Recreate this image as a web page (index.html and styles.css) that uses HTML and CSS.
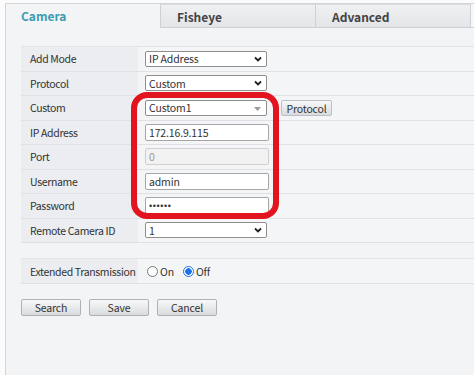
FILE: index.html
```html
<!DOCTYPE html>
<html lang="en">
<head>
    <meta charset="UTF-8">
    <title>Camera</title>
    <link rel="stylesheet" href="styles.css">
</head>
<body>
    <div class="frame">
        <!-- tabs -->
        <div class="tabs">
            <div class="tab active">Camera</div>
            <div class="tab">Fisheye</div>
            <div class="tab">Advanced</div>
            <div class="tab-rest"></div>
        </div>

        <div class="content">
            <div class="form">
                <div class="row">
                    <div class="label">Add Mode</div>
                    <div class="value">
                        <div class="select">IP Address<svg class="chev" width="8" height="6" viewBox="0 0 8 6"><path d="M1 1.5 L4 4.5 L7 1.5" fill="none" stroke="#222" stroke-width="1.8"/></svg></div>
                    </div>
                </div>
                <div class="row">
                    <div class="label">Protocol</div>
                    <div class="value">
                        <div class="select">Custom<svg class="chev" width="8" height="6" viewBox="0 0 8 6"><path d="M1 1.5 L4 4.5 L7 1.5" fill="none" stroke="#222" stroke-width="1.8"/></svg></div>
                    </div>
                </div>
                <div class="row">
                    <div class="label">Custom</div>
                    <div class="value">
                        <div class="select">Custom1<svg class="tri" width="7" height="4" viewBox="0 0 7 4"><path d="M0 0 L7 0 L3.5 4 Z" fill="#9a9a9a"/></svg></div>
                        <button class="btn small">Protocol</button>
                    </div>
                </div>
                <div class="row">
                    <div class="label">IP Address</div>
                    <div class="value"><div class="input">172.16.9.115</div></div>
                </div>
                <div class="row">
                    <div class="label">Port</div>
                    <div class="value"><div class="input disabled">0</div></div>
                </div>
                <div class="row">
                    <div class="label">Username</div>
                    <div class="value"><div class="input">admin</div></div>
                </div>
                <div class="row">
                    <div class="label">Password</div>
                    <div class="value"><div class="input dots">&bull;&bull;&bull;&bull;&bull;&bull;</div></div>
                </div>
                <div class="row">
                    <div class="label">Remote Camera ID</div>
                    <div class="value">
                        <div class="select">1<svg class="chev" width="8" height="6" viewBox="0 0 8 6"><path d="M1 1.5 L4 4.5 L7 1.5" fill="none" stroke="#222" stroke-width="1.8"/></svg></div>
                    </div>
                </div>
            </div>

            <div class="form ext">
                <div class="row">
                    <div class="label">Extended Transmission</div>
                    <div class="value radios">
                        <span class="radio"></span><span class="rlabel">On</span>
                        <span class="radio checked"></span><span class="rlabel">Off</span>
                    </div>
                </div>
            </div>

            <div class="actions">
                <button class="btn">Search</button>
                <button class="btn">Save</button>
                <button class="btn">Cancel</button>
            </div>
        </div>
    </div>

    <!-- red highlight drawn over the form -->
    <div class="highlight"></div>
</body>
</html>
```

FILE: styles.css
```css
html, body {
    margin: 0;
    height: 100%;
    overflow: hidden;
}
body {
    position: relative;
    background-color: #fbfbfb;
    font-family: "Noto Sans CJK SC", "Noto Sans", sans-serif;
    font-size: 10.5px;
    letter-spacing: -0.15px;
    color: #333;
}
.frame {
    margin: 3px 0 0 5px;
    height: 372px;
    border-left: 1px solid #d3d5d8;
    border-top: 1px solid #d3d5d8;
    background-color: #f3f4f6;
}
.tabs {
    display: flex;
    height: 24px;
}
.tab {
    box-sizing: border-box;
    width: 155px;
    height: 24px;
    padding-left: 16px;
    line-height: 23px;
    font-size: 12px;
    font-weight: bold;
    letter-spacing: 0;
    color: #444;
    background: linear-gradient(#eff0f2, #e3e5e8);
    border-left: 1px solid #cdd0d4;
    border-bottom: 1px solid #cdd0d4;
    border-top: 1px solid #d9dbde;
}
.tab.active {
    width: 154px;
    padding-left: 15px;
    color: #3c9cb4;
    background: #f3f4f6;
    border: none;
}
.tab-rest {
    flex: 1;
    border-left: 1px solid #cdd0d4;
    border-bottom: 1px solid #cdd0d4;
    background-color: #f6f7f8;
}
.content {
    padding: 18px 0 0 15px;
}
.form {
    width: 460px;
    border-top: 1px solid #e2e4e7;
}
.row {
    box-sizing: border-box;
    display: grid;
    grid-template-columns: 117px 1fr;
    height: 24.5px;
    border-bottom: 1px solid #dfe1e4;
}
.label {
    display: flex;
    align-items: center;
    padding-left: 9px;
    white-space: nowrap;
    letter-spacing: -0.35px;
    background-color: #ebedf0;
}
.value {
    display: flex;
    align-items: center;
    padding-left: 7px;
    background-color: #f4f5f7;
}
.select, .input {
    box-sizing: border-box;
    display: flex;
    align-items: center;
    position: relative;
    width: 122px;
    height: 16px;
    padding-left: 3px;
    background-color: #fff;
    border: 1px solid #8e8e8e;
    border-radius: 2px;
}
.input {
    width: 124px;
    height: 17px;
    border-color: #a6a6a6;
}
.input.disabled {
    color: #999;
    background-color: #f2f2f2;
    border-color: #cfcfcf;
}
.input.dots {
    font-family: "Liberation Sans", sans-serif;
    font-size: 9px;
    letter-spacing: 0.6px;
}
.chev, .tri {
    position: absolute;
    right: 4px;
    top: 4px;
}
.tri {
    top: 6px;
    right: 5px;
}
.btn {
    box-sizing: border-box;
    width: 60px;
    height: 17px;
    padding: 0;
    font-family: inherit;
    font-size: 10.5px;
    letter-spacing: inherit;
    color: #333;
    background: linear-gradient(#f7f8f9, #d9dcdf);
    border: 1px solid #aeb1b5;
    border-radius: 2px;
}
.btn.small {
    width: 51px;
    height: 16px;
    margin-left: 14px;
    border-color: #bcc0c4;
}
.ext {
    margin-top: 15px;
}
.ext .row {
    height: 25px;
}
.radios {
    padding-left: 9px;
}
.radio {
    box-sizing: border-box;
    width: 11px;
    height: 11px;
    border: 1px solid #777;
    border-radius: 50%;
    background-color: #fff;
}
.radio.checked {
    border-color: #1a73e8;
    background: radial-gradient(circle, #1a73e8 0 3px, #fff 3.5px);
}
.rlabel {
    margin: 0 9px 0 2px;
}
.actions {
    display: flex;
    gap: 8px;
    margin-top: 15px;
}
.highlight {
    position: absolute;
    left: 131px;
    top: 92px;
    width: 136px;
    height: 115px;
    border: 6px solid #e2141f;
    border-radius: 16px;
}
```
